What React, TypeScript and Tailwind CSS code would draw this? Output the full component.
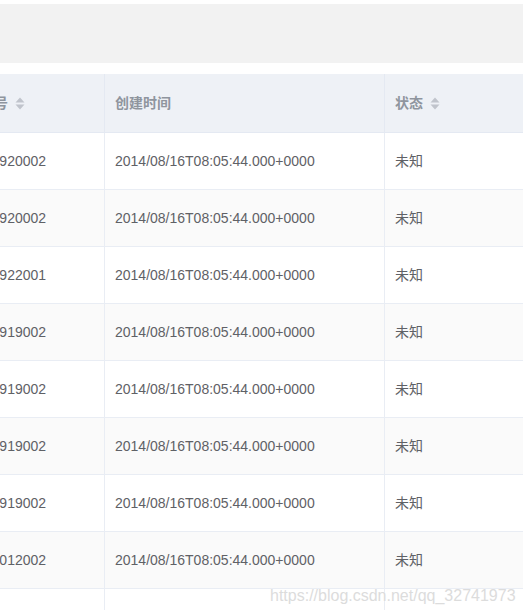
const rows = [
  "201920002",
  "201920002",
  "201922001",
  "201919002",
  "201919002",
  "201919002",
  "201919002",
  "201012002",
  "201012002",
];

function SortIcon() {
  return (
    <svg width="10" height="13" viewBox="0 0 10 13" className="ml-[7px] shrink-0">
      <path d="M5 0.5 L9.5 5.5 L0.5 5.5 Z" fill="#c0c4cc" />
      <path d="M0.5 7.5 L9.5 7.5 L5 12.5 Z" fill="#c0c4cc" />
    </svg>
  );
}

export default function App() {
  return (
    <div
      className="relative w-[523px] h-[610px] overflow-hidden bg-white text-[14px]"
      style={{ fontFamily: '"Liberation Sans", Arial, "Noto Sans CJK SC", sans-serif' }}
    >
      <div className="mt-[4px] h-[59px] bg-[#f2f2f2]" />
      <div className="mt-[11px] ml-[-33px] w-[700px]">
        <div className="flex h-[59px] bg-[#eef1f6] border-b border-[#e4e9f2] font-bold text-[#8f959e]">
          <div className="w-[138px] flex items-center pl-[13px] border-r border-[#e4e9f2]">
            <span>编号</span>
            <SortIcon />
          </div>
          <div className="w-[280px] flex items-center pl-[10px] border-r border-[#e4e9f2]">
            <span>创建时间</span>
          </div>
          <div className="flex-1 flex items-center pl-[10px]">
            <span>状态</span>
            <SortIcon />
          </div>
        </div>
        {rows.map((id, i) => (
          <div
            key={i}
            className={
              i % 2 === 1
                ? "flex h-[57px] bg-[#fafafa] border-b border-[#e9edf4] text-[#5f6166]"
                : "flex h-[57px] bg-white border-b border-[#e9edf4] text-[#5f6166]"
            }
          >
            <div className="w-[138px] flex items-center pl-[9px] border-r border-[#e9edf4]">
              {id}
            </div>
            <div className="w-[280px] flex items-center pl-[10px] border-r border-[#e9edf4]">
              2014/08/16T08:05:44.000+0000
            </div>
            <div className="flex-1 flex items-center pl-[10px]">未知</div>
          </div>
        ))}
      </div>
      <div
        className="absolute left-[270px] top-[586px] text-[16px] leading-[20px] text-[#dcdcdc] whitespace-nowrap"
        style={{ textShadow: "0 0 1px #ffffff" }}
      >
        https://blog.csdn.net/qq_32741973
      </div>
    </div>
  );
}
